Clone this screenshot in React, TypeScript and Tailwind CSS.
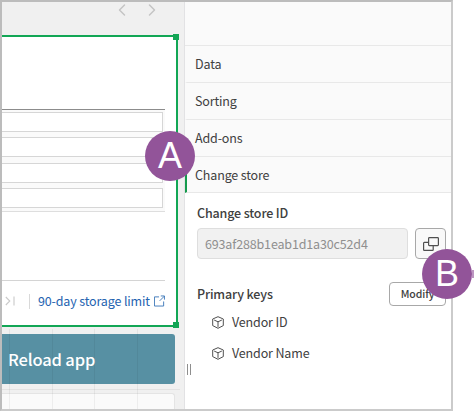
import { ChevronLeft, ChevronRight } from "lucide-react";

const SECTIONS = [
  { label: "Data", height: "h-[37px]" },
  { label: "Sorting", height: "h-[37px]" },
  { label: "Add-ons", height: "h-[37px]" },
  { label: "Change store", height: "h-9", active: true },
];

const PRIMARY_KEYS = ["Vendor ID", "Vendor Name"];

const CubeIcon = () => (
  <svg width="12" height="13" viewBox="0 0 12 13" fill="none" stroke="#505050" strokeWidth="1" strokeLinejoin="round">
    <path d="M6 .7 11.3 3v6.6L6 12.3.7 9.6V3L6 .7Z" />
    <path d="m2.5 4.2 3.5 1.6 3.5-1.6M6 5.8v4.7" strokeLinecap="round" />
  </svg>
);

const CopyIcon = () => (
  <svg width="16" height="14" viewBox="0 0 16 14" fill="none" stroke="#505050" strokeWidth="1.2">
    <rect x="5.6" y=".6" width="9.8" height="8" rx=".8" />
    <path d="M5.6 5.4H1.3a.7.7 0 0 0-.7.7v6.6c0 .4.3.7.7.7h8.2c.4 0 .7-.3.7-.7V8.6" />
  </svg>
);

const ExternalIcon = () => (
  <svg width="12" height="12" viewBox="0 0 12 12" fill="none" stroke="#3b76b8" strokeWidth="1">
    <path d="M5.5 1.5h-5v10h10V6.5M7.4.5h4v4M11.2.8 6.2 5.8" />
  </svg>
);

const Marker = ({ letter, className }: { letter: string; className: string }) => (
  <div
    className={`absolute z-20 flex size-[50px] items-center justify-center rounded-full bg-[#925499] font-['Liberation_Sans',sans-serif] text-[36px] leading-none text-white ${className}`}
  >
    {letter}
  </div>
);

const TablePane = () => (
  <div className="relative h-[292px] w-[176px] shrink-0 border-y-2 border-r-2 border-[#12a655] bg-white">
    <div className="absolute -top-[3px] -right-[3px] size-[6px] bg-[#12a655]" />
    <div className="absolute -right-[3px] -bottom-[3px] size-[6px] bg-[#12a655]" />
    <div className="flex h-full w-[163px] flex-col">
      <div className="h-[73px] shrink-0 border-b border-[#8c8c8c]" />
      <div className="flex h-[102px] shrink-0 flex-col justify-between border-b border-[#dedede] bg-[#fafafa] pt-[2px] pr-[2px] pb-[3px]">
        {[0, 1, 2, 3].map((row) => (
          <div key={row} className="h-5 border-y border-r border-[#d6d6d6] bg-white" />
        ))}
      </div>
      <div className="h-[69px] shrink-0 border-b border-[#d4d4d4]" />
      <div className="flex h-10 shrink-0 items-center">
        <svg width="10" height="10" viewBox="0 0 10 10" className="ml-[3px] shrink-0" fill="none" stroke="#c9c9c9" strokeWidth="1.1">
          <path d="m.8 1 4 4-4 4M9 .5v9" />
        </svg>
        <div className="ml-[14px] h-[15px] w-px shrink-0 bg-[#d9d9d9]" />
        <span className="ml-[8px] w-[116px] shrink-0 text-[12.5px] leading-4 tracking-[-0.15px] whitespace-nowrap text-[#2563b0]">
          90-day storage limit
        </span>
        <ExternalIcon />
      </div>
    </div>
  </div>
);

const Canvas = () => (
  <div className="relative flex w-[182px] shrink-0 flex-col overflow-hidden bg-[#f0f0f0]">
    <div className="flex h-[33px] shrink-0 items-start gap-[10px] pl-[110px] text-[#c4c4c4]">
      <ChevronLeft size={20} strokeWidth={1.8} className="-mt-[2px]" />
      <ChevronRight size={20} strokeWidth={1.8} className="-mt-[2px]" />
    </div>
    <TablePane />
    <div className="mt-[7px] flex h-[50px] w-[173px] shrink-0 items-center rounded-r-[3px] bg-[#5790a3] pl-[6px] text-[16.5px] leading-6 font-medium tracking-[-0.15px] text-white">
      Reload app
    </div>
    <div className="mt-[5px] h-px w-[178px] shrink-0 bg-[#e2e2e2]" />
    <div className="mt-[3px] h-5 w-[173px] shrink-0 rounded-tr-[3px] border-t border-r border-[#e4e4e4] bg-[#fafafa]" />
    {/* Sheet grid shows through the objects */}
    <div className="absolute top-[327px] bottom-0 left-[7px] flex w-[129px] justify-between">
      {[0, 1, 2, 3].map((line) => (
        <div key={line} className="w-px bg-black/5" />
      ))}
    </div>
  </div>
);

const Properties = () => (
  <div className="flex w-[267px] shrink-0 flex-col border-l border-[#e2e2e4] bg-white text-[12.5px] leading-4 tracking-[-0.15px] text-[#404040]">
    <div className="h-11 shrink-0 border-b border-[#e8e8e8] bg-[#fafafa]" />
    {SECTIONS.map(({ label, height, active }) => (
      <div
        key={label}
        className={`flex shrink-0 items-center border-b border-l-2 border-b-[#e8e8e8] bg-[#fafafa] pl-[8px] ${height} ${active ? "border-l-[#149a4c]" : "border-l-transparent"}`}
      >
        {label}
      </div>
    ))}
    <div className="pt-[12px] pr-[5px] pl-[12px]">
      <p className="font-medium">Change store ID</p>
      <div className="mt-[7px] flex justify-between">
        <div className="flex h-[31px] w-[211px] items-center rounded-[4px] border border-[#dedede] bg-[#f1f1f1] pl-[7px] text-[#8f8f8f]">
          693af288b1eab1d1a30c52d4
        </div>
        <button className="flex size-[31px] items-center justify-center rounded-[4px] border border-[#a8a8a8] bg-[#f9f9f9]">
          <CopyIcon />
        </button>
      </div>
      <div className="mt-[23px] flex items-center justify-between">
        <p className="font-medium">Primary keys</p>
        <button className="h-6 w-[57px] rounded-[4px] border border-[#a8a8a8] bg-white text-[10.5px] font-medium tracking-[-0.1px]">
          Modify
        </button>
      </div>
      <ul className="mt-[8px] ml-[15px] flex flex-col gap-[15px]">
        {PRIMARY_KEYS.map((name) => (
          <li key={name} className="flex h-4 items-center gap-[8px]">
            <CubeIcon />
            {name}
          </li>
        ))}
      </ul>
    </div>
    <div className="mt-[3px] ml-[2px] flex h-[11px] w-[4px] justify-between">
      <div className="w-px bg-[#8e8e8e]" />
      <div className="w-px bg-[#8e8e8e]" />
    </div>
  </div>
);

const App = () => (
  <div className="relative h-[411px] w-[474px] overflow-hidden bg-white font-['Noto_Sans_CJK_SC',sans-serif]">
    <div className="flex h-[411px] w-[453px] overflow-hidden border-2 border-[#bcbcbc] border-r-[#cbcbcb] border-b-[#cbcbcb]">
      <Canvas />
      <Properties />
    </div>
    <Marker letter="A" className="top-[131px] left-[145px]" />
    <Marker letter="B" className="top-[249px] left-[422px]" />
    {/* Start of the callout line leaving the frame */}
    <div className="absolute top-[270px] right-0 h-2 w-[2px] bg-[#bd95c1]" />
  </div>
);

export default App;
